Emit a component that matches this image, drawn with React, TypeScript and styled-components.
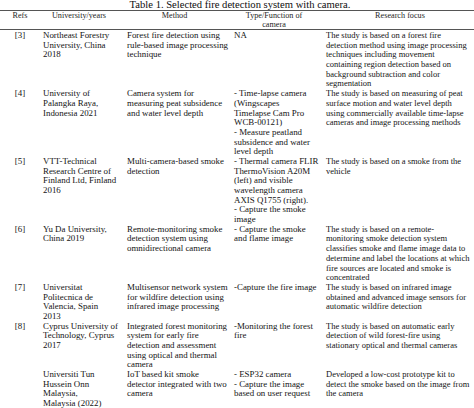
import React, { FC } from "react";
import styled, { createGlobalStyle } from "styled-components";

type Row = {
  ref: string;
  uni: string[];
  method: string[];
  type: string[];
  focus: string[];
};

const rows: Row[] = [
  {
    ref: "[3]",
    uni: ["Northeast Forestry", "University, China", "2018"],
    method: ["Forest fire detection using", "rule-based image processing", "technique"],
    type: ["NA"],
    focus: [
      "The study is based on a forest fire",
      "detection method using image processing",
      "techniques including movement",
      "containing region detection based on",
      "background subtraction and color",
      "segmentation",
    ],
  },
  {
    ref: "[4]",
    uni: ["University of", "Palangka Raya,", "Indonesia 2021"],
    method: ["Camera system for", "measuring peat subsidence", "and water level depth"],
    type: [
      "- Time-lapse camera",
      "(Wingscapes",
      "Timelapse Cam Pro",
      "WCB-00121)",
      "- Measure peatland",
      "subsidence and water",
      "level depth",
    ],
    focus: [
      "The study is based on measuring of peat",
      "surface motion and water level depth",
      "using commercially available time-lapse",
      "cameras and image processing methods",
    ],
  },
  {
    ref: "[5]",
    uni: ["VTT-Technical", "Research Centre of", "Finland Ltd, Finland", "2016"],
    method: ["Multi-camera-based smoke", "detection"],
    type: [
      "- Thermal camera FLIR",
      "ThermoVision A20M",
      "(left) and visible",
      "wavelength camera",
      "AXIS Q1755 (right).",
      "- Capture the smoke",
      "image",
    ],
    focus: ["The study is based on a smoke from the", "vehicle"],
  },
  {
    ref: "[6]",
    uni: ["Yu Da University,", "China 2019"],
    method: ["Remote-monitoring smoke", "detection system using", "omnidirectional camera"],
    type: ["- Capture the smoke", "and flame image"],
    focus: [
      "The study is based on a remote-",
      "monitoring smoke detection system",
      "classifies smoke and flame image data to",
      "determine and label the locations at which",
      "fire sources are located and smoke is",
      "concentrated",
    ],
  },
  {
    ref: "[7]",
    uni: ["Universitat", "Politecnica de", "Valencia, Spain", "2013"],
    method: ["Multisensor network system", "for wildfire detection using", "infrared image processing"],
    type: ["-Capture the fire image"],
    focus: [
      "The study is based on infrared image",
      "obtained and advanced image sensors for",
      "automatic wildfire detection",
    ],
  },
  {
    ref: "[8]",
    uni: ["Cyprus University of", "Technology, Cyprus", "2017"],
    method: [
      "Integrated forest monitoring",
      "system for early fire",
      "detection and assessment",
      "using optical and thermal",
      "camera",
    ],
    type: ["-Monitoring the forest", "fire"],
    focus: [
      "The study is based on automatic early",
      "detection of wild forest-fire using",
      "stationary optical and thermal cameras",
    ],
  },
  {
    ref: "",
    uni: ["Universiti Tun", "Hussein Onn", "Malaysia,", "Malaysia (2022)"],
    method: ["IoT based kit smoke", "detector integrated with two", "camera"],
    type: ["- ESP32 camera", "- Capture the image", "based on user request"],
    focus: [
      "Developed a low-cost prototype kit to",
      "detect the smoke based on the image from",
      "the camera",
    ],
  },
];

const Lines: FC<{ lines: string[] }> = ({ lines }) => (
  <>
    {lines.map((l, i) => (
      <Line key={i}>{l}</Line>
    ))}
  </>
);

const App: FC = () => (
  <>
    <GlobalStyle />
    <Page>
      <Caption>Table 1. Selected fire detection system with camera.</Caption>
      <Table>
        <colgroup>
          <col style={{ width: 43 }} />
          <col style={{ width: 84 }} />
          <col style={{ width: 107 }} />
          <col style={{ width: 92 }} />
          <col style={{ width: 148 }} />
        </colgroup>
        <thead>
          <tr>
            <Th $center>Refs</Th>
            <Th>University/years</Th>
            <Th>Method</Th>
            <Th>
              <Line>Type/Function of</Line>
              <Line>camera</Line>
            </Th>
            <Th $last>Research focus</Th>
          </tr>
        </thead>
        <tbody>
          {rows.map((r, i) => (
            <tr key={i}>
              <Td $center>{r.ref}</Td>
              <Td><Lines lines={r.uni} /></Td>
              <Td><Lines lines={r.method} /></Td>
              <Td><Lines lines={r.type} /></Td>
              <Td $last><Lines lines={r.focus} /></Td>
            </tr>
          ))}
        </tbody>
      </Table>
    </Page>
  </>
);

export default App;

const GlobalStyle = createGlobalStyle`
  html, body {
    margin: 0;
    padding: 0;
    background: #fff;
  }
  body {
    font-family: "Liberation Serif", "Times New Roman", serif;
    color: #141414;
  }
`;

const Page = styled.div`
  width: 474px;
  height: 408px;
  overflow: hidden;
`;

const Caption = styled.div`
  height: 10px;
  line-height: 11px;
  margin-top: -1px;
  font-size: 10.6px;
  text-align: center;
  padding-left: 6px;
  color: #0e0e0e;
`;

const Table = styled.table`
  width: 474px;
  margin-top: 1px;
  table-layout: fixed;
  border-collapse: collapse;
  border-top: 1px solid #555;
`;

const Th = styled.th<{ $center?: boolean; $last?: boolean }>`
  font-weight: normal;
  font-size: 8.2px;
  line-height: 9px;
  height: 18px;
  padding: 0 ${(p) => (p.$last ? "0" : p.$center ? "3px" : "12px")} 0 0;
  text-align: center;
  vertical-align: top;
  border-bottom: 1px solid #555;
  color: #262626;
`;

const Td = styled.td<{ $center?: boolean; $last?: boolean }>`
  font-size: ${(p) => (p.$last ? "8.5px" : "8.9px")};
  line-height: 9.68px;
  padding: 0 ${(p) => (p.$last ? "0" : p.$center ? "3px" : "4px")} 0 0;
  text-align: ${(p) => (p.$center ? "center" : "left")};
  vertical-align: top;
  white-space: nowrap;

  tbody tr:first-child > & {
    padding-top: 1px;
  }
`;

const Line = styled.span`
  display: block;
  white-space: nowrap;
`;
